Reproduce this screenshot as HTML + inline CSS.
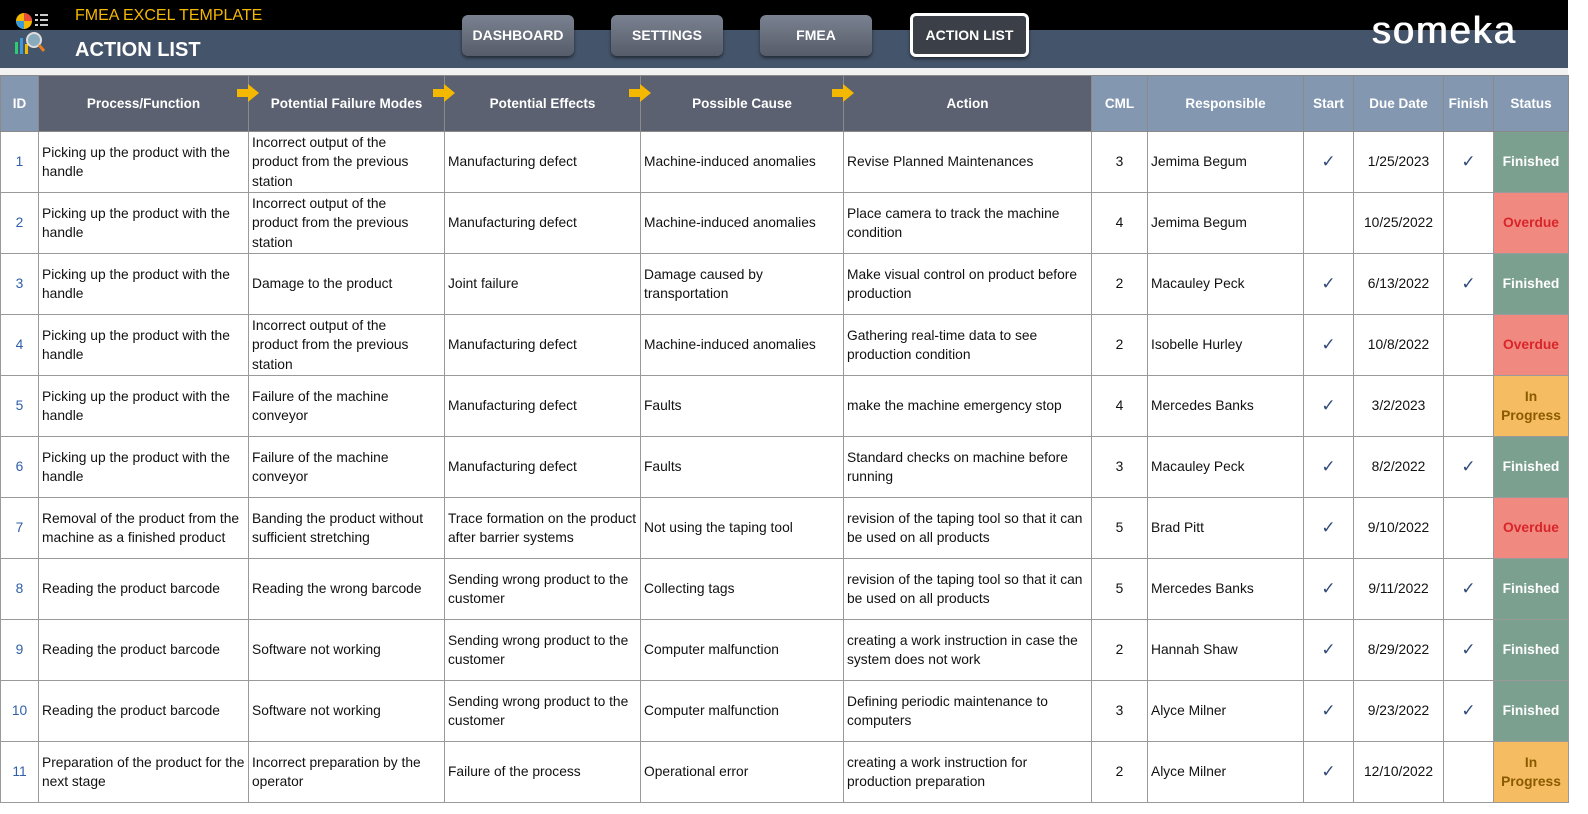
<!DOCTYPE html>
<html><head><meta charset="utf-8"><style>
*{margin:0;padding:0;box-sizing:border-box}
body{width:1588px;height:814px;background:#fff;font-family:"Liberation Sans",sans-serif;position:relative;overflow:hidden}
.top{position:absolute;left:0;top:0;width:1568px;height:30px;background:#000}
.band{position:absolute;left:0;top:30px;width:1568px;height:38px;background:#44546a}
.gap{position:absolute;left:0;top:68px;width:1568px;height:7px;background:#f2f2f2}
.t1{position:absolute;left:75px;top:7px;color:#f5b800;font-size:16px}
.t2{position:absolute;left:75px;top:39px;color:#fff;font-size:20px;font-weight:bold}
.btn{position:absolute;top:15px;height:41px;width:112px;border-radius:6px;background:linear-gradient(#7a8190,#565c69);color:#fff;font-weight:bold;font-size:14px;text-align:center;line-height:41px;box-shadow:0 2px 3px rgba(0,0,0,.5)}
.act{background:#3b3f47;border:3px solid #fff;line-height:38px;width:119px;top:13px;height:44px}
.logo{position:absolute;left:1372px;top:10px;color:#fff;font-size:38px;letter-spacing:2px;text-shadow:0.5px 0 0 #fff,-0.5px 0 0 #fff}
table{position:absolute;left:0;top:75px;border-collapse:collapse;table-layout:fixed;width:1568px}
th{height:56px;color:#fff;font-size:13.5px;font-weight:bold;background:#5b6170;border:1px solid #8a8a8a;position:relative}
th.l{background:#8497b0}
td{height:61px;border:1px solid #9a9a9a;font-size:13.8px;padding:0 3px;line-height:19.5px;color:#111}
td.c{text-align:center}
td.id{text-align:center;color:#2f5fa8}
.F{background:#7ba08f;color:#fff;font-weight:bold;text-align:center}
.O{background:#f08a80;color:#d9252a;font-weight:bold;text-align:center}
.P{background:#f5bc61;color:#8a5a00;font-weight:bold;text-align:center}
.arr{position:absolute;right:-11px;top:8px;z-index:3}
.ck{color:#2f4a78;font-size:17px}
</style></head><body>
<div class="top"></div><div class="band"></div><div class="gap"></div>
<svg style="position:absolute;left:12px;top:8px" width="50" height="52">
<circle cx="12" cy="13" r="8" fill="#f5b800"/><path d="M12 13 L12 5 A8 8 0 0 1 20 13Z" fill="#e74c3c"/><path d="M12 13 L4 13 A8 8 0 0 0 12 21Z" fill="#3a9ad9"/>
<rect x="23" y="6" width="3" height="2" fill="#ccc"/><rect x="28" y="6" width="8" height="2" fill="#ccc"/><rect x="23" y="11" width="3" height="2" fill="#ccc"/><rect x="28" y="11" width="8" height="2" fill="#ccc"/><rect x="23" y="16" width="3" height="2" fill="#ccc"/><rect x="28" y="16" width="8" height="2" fill="#ccc"/>
<rect x="3" y="34" width="3" height="12" fill="#2ecc71"/><rect x="8" y="30" width="3" height="16" fill="#3a9ad9"/><rect x="13" y="36" width="3" height="10" fill="#f5b800"/>
<circle cx="22" cy="32" r="7" fill="#8ab" stroke="#ddd" stroke-width="2"/><line x1="27" y1="37" x2="32" y2="43" stroke="#e67e22" stroke-width="3"/>
</svg>
<div class="t1">FMEA EXCEL TEMPLATE</div><div class="t2">ACTION LIST</div>
<div class="btn" style="left:462px">DASHBOARD</div>
<div class="btn" style="left:611px">SETTINGS</div>
<div class="btn" style="left:760px">FMEA</div>
<div class="btn act" style="left:910px">ACTION LIST</div>
<div class="logo">someka</div>
<table>
<colgroup><col style="width:38px"><col style="width:210px"><col style="width:196px"><col style="width:196px"><col style="width:203px"><col style="width:248px"><col style="width:56px"><col style="width:156px"><col style="width:50px"><col style="width:90px"><col style="width:50px"><col style="width:75px"></colgroup>
<tr><th class="l">ID</th><th>Process/Function<svg class="arr" width="22" height="18"><path d="M0 5h11V0l11 9-11 9v-5H0z" fill="#f5b800"/></svg></th><th>Potential Failure Modes<svg class="arr" width="22" height="18"><path d="M0 5h11V0l11 9-11 9v-5H0z" fill="#f5b800"/></svg></th><th>Potential Effects<svg class="arr" width="22" height="18"><path d="M0 5h11V0l11 9-11 9v-5H0z" fill="#f5b800"/></svg></th><th>Possible Cause<svg class="arr" width="22" height="18"><path d="M0 5h11V0l11 9-11 9v-5H0z" fill="#f5b800"/></svg></th><th>Action</th><th class="l">CML</th><th class="l">Responsible</th><th class="l">Start</th><th class="l">Due Date</th><th class="l">Finish</th><th class="l">Status</th></tr>
<tr><td class="id">1</td><td>Picking up the product with the handle</td><td>Incorrect output of the<br>product from the previous<br>station</td><td>Manufacturing defect</td><td>Machine-induced anomalies</td><td>Revise Planned Maintenances</td><td class="c">3</td><td>Jemima Begum</td><td class="c ck">✓</td><td class="c">1/25/2023</td><td class="c ck">✓</td><td class="F">Finished</td></tr>
<tr><td class="id">2</td><td>Picking up the product with the handle</td><td>Incorrect output of the<br>product from the previous<br>station</td><td>Manufacturing defect</td><td>Machine-induced anomalies</td><td>Place camera to track the machine condition</td><td class="c">4</td><td>Jemima Begum</td><td></td><td class="c">10/25/2022</td><td></td><td class="O">Overdue</td></tr>
<tr><td class="id">3</td><td>Picking up the product with the handle</td><td>Damage to the product</td><td>Joint failure</td><td>Damage caused by transportation</td><td>Make visual control on product before production</td><td class="c">2</td><td>Macauley Peck</td><td class="c ck">✓</td><td class="c">6/13/2022</td><td class="c ck">✓</td><td class="F">Finished</td></tr>
<tr><td class="id">4</td><td>Picking up the product with the handle</td><td>Incorrect output of the<br>product from the previous<br>station</td><td>Manufacturing defect</td><td>Machine-induced anomalies</td><td>Gathering real-time data to see production condition</td><td class="c">2</td><td>Isobelle Hurley</td><td class="c ck">✓</td><td class="c">10/8/2022</td><td></td><td class="O">Overdue</td></tr>
<tr><td class="id">5</td><td>Picking up the product with the handle</td><td>Failure of the machine conveyor</td><td>Manufacturing defect</td><td>Faults</td><td>make the machine emergency stop</td><td class="c">4</td><td>Mercedes Banks</td><td class="c ck">✓</td><td class="c">3/2/2023</td><td></td><td class="P">In<br>Progress</td></tr>
<tr><td class="id">6</td><td>Picking up the product with the handle</td><td>Failure of the machine conveyor</td><td>Manufacturing defect</td><td>Faults</td><td>Standard checks on machine before running</td><td class="c">3</td><td>Macauley Peck</td><td class="c ck">✓</td><td class="c">8/2/2022</td><td class="c ck">✓</td><td class="F">Finished</td></tr>
<tr><td class="id">7</td><td>Removal of the product from the machine as a finished product</td><td>Banding the product without sufficient stretching</td><td>Trace formation on the product after barrier systems</td><td>Not using the taping tool</td><td>revision of the taping tool so that it can be used on all products</td><td class="c">5</td><td>Brad Pitt</td><td class="c ck">✓</td><td class="c">9/10/2022</td><td></td><td class="O">Overdue</td></tr>
<tr><td class="id">8</td><td>Reading the product barcode</td><td>Reading the wrong barcode</td><td>Sending wrong product to the customer</td><td>Collecting tags</td><td>revision of the taping tool so that it can be used on all products</td><td class="c">5</td><td>Mercedes Banks</td><td class="c ck">✓</td><td class="c">9/11/2022</td><td class="c ck">✓</td><td class="F">Finished</td></tr>
<tr><td class="id">9</td><td>Reading the product barcode</td><td>Software not working</td><td>Sending wrong product to the customer</td><td>Computer malfunction</td><td>creating a work instruction in case the system does not work</td><td class="c">2</td><td>Hannah Shaw</td><td class="c ck">✓</td><td class="c">8/29/2022</td><td class="c ck">✓</td><td class="F">Finished</td></tr>
<tr><td class="id">10</td><td>Reading the product barcode</td><td>Software not working</td><td>Sending wrong product to the customer</td><td>Computer malfunction</td><td>Defining periodic maintenance to computers</td><td class="c">3</td><td>Alyce Milner</td><td class="c ck">✓</td><td class="c">9/23/2022</td><td class="c ck">✓</td><td class="F">Finished</td></tr>
<tr><td class="id">11</td><td>Preparation of the product for the next stage</td><td>Incorrect preparation by the operator</td><td>Failure of the process</td><td>Operational error</td><td>creating a work instruction for production preparation</td><td class="c">2</td><td>Alyce Milner</td><td class="c ck">✓</td><td class="c">12/10/2022</td><td></td><td class="P">In<br>Progress</td></tr>
</table>
</body></html>
